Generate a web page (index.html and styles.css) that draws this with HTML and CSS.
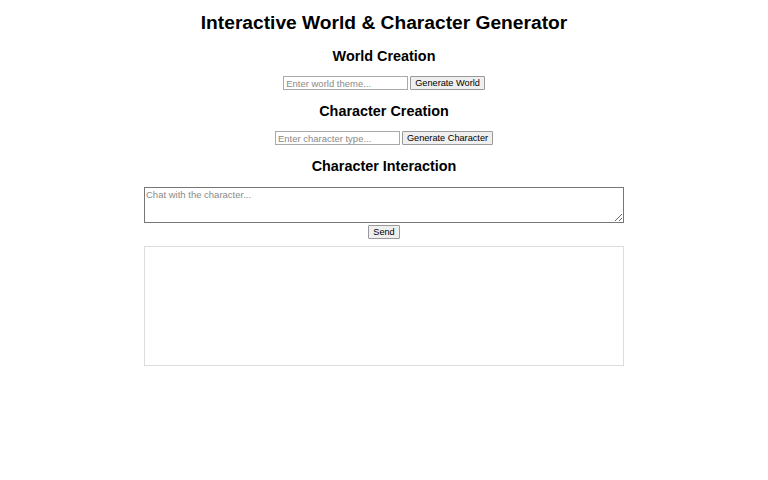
FILE: index.html
```html
<!DOCTYPE html>
<html lang="en">
<head>
    <meta charset="UTF-8">
    <meta name="viewport" content="width=device-width, initial-scale=1.0">
    <title>Interactive World &amp; Character Generator</title>
    <link rel="stylesheet" href="styles.css">
</head>
<body>
    <h1>Interactive World &amp; Character Generator</h1>

    <h2>World Creation</h2>
    <div class="row">
        <input type="text" id="worldTheme" placeholder="Enter world theme...">
        <button onclick="generateWorld()">Generate World</button>
    </div>

    <h2>Character Creation</h2>
    <div class="row">
        <input type="text" id="characterType" placeholder="Enter character type...">
        <button onclick="generateCharacter()">Generate Character</button>
    </div>

    <h2>Character Interaction</h2>
    <textarea id="chatInput" placeholder="Chat with the character..."></textarea>
    <div class="send-row">
        <button onclick="sendMessage()">Send</button>
    </div>
    <div id="output" class="output"></div>

    <script>
        function generateWorld() {
            const theme = document.getElementById("worldTheme").value;
            document.getElementById("output").innerText = "World: " + theme;
        }

        function generateCharacter() {
            const type = document.getElementById("characterType").value;
            document.getElementById("output").innerText = "Character: " + type;
        }

        function sendMessage() {
            const msg = document.getElementById("chatInput").value;
            document.getElementById("output").innerText += "\nYou: " + msg;
        }
    </script>
</body>
</html>
```

FILE: styles.css
```css
body {
    font-family: "Liberation Sans", Arial, sans-serif;
    margin: 0;
    padding: 0;
    background: #fff;
    color: #000;
    text-align: center;
}
h1 {
    font-size: 19.2px;
    line-height: 24px;
    margin: 11px 0 12px;
}
h2 {
    font-size: 14.4px;
    line-height: 18px;
    margin: 0 0 11px;
}
.row {
    display: flex;
    justify-content: center;
    gap: 2px;
    margin-bottom: 12px;
}
input[type="text"] {
    box-sizing: border-box;
    width: 125px;
    height: 14px;
    padding: 0 2px;
    font-family: "Liberation Sans", Arial, sans-serif;
    font-size: 9.5px;
    border: 1px solid #a9a9a9;
}
button {
    box-sizing: border-box;
    height: 14px;
    padding: 0 4px;
    font-family: "Liberation Sans", Arial, sans-serif;
    font-size: 9.2px;
    line-height: 12px;
    color: #000;
    background: #efefef;
    border: 1px solid #9a9a9a;
    border-radius: 1px;
    cursor: pointer;
}
button:hover {
    background: #e5e5e5;
}
::placeholder {
    color: #8a8a8a;
}
textarea {
    display: block;
    box-sizing: border-box;
    width: 480px;
    height: 36px;
    margin: 12px auto 0;
    padding: 1px 1px;
    font-family: "Liberation Sans", Arial, sans-serif;
    font-size: 9.5px;
    border: 1px solid #767676;
}
.send-row {
    display: flex;
    justify-content: center;
    margin-top: 2px;
}
.output {
    box-sizing: border-box;
    width: 480px;
    height: 120px;
    margin: 7px auto 0;
    border: 1px solid #ddd;
    text-align: left;
    font-size: 10px;
    white-space: pre-wrap;
}
```
